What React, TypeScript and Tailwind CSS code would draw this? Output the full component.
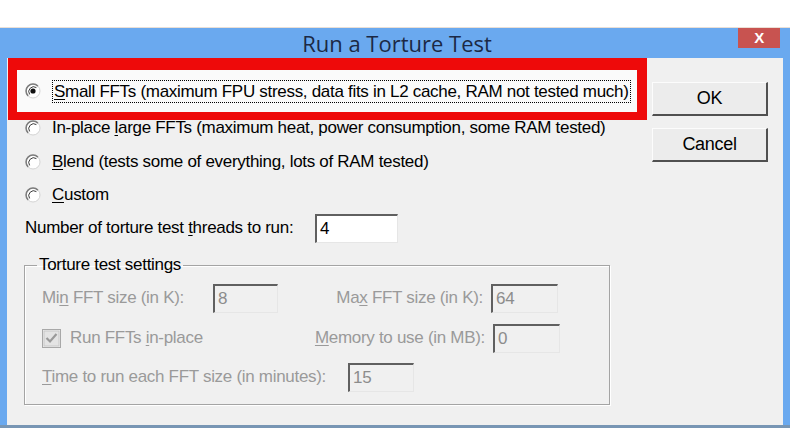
import React from "react";

const font = "font-['Liberation_Sans',Arial,sans-serif] text-[17px] tracking-[-0.3px]";

function Radio({ checked }: { checked?: boolean }) {
  return (
    <svg width="16" height="16" viewBox="0 0 16 16" className="shrink-0">
      <circle cx="8" cy="8" r="7" fill="#ffffff" stroke="#d4d4d4" strokeWidth="1" />
      <path d="M3.1 12.9 A6.9 6.9 0 0 1 12.9 3.1" fill="none" stroke="#7c7c7c" strokeWidth="1.5" />
      <path d="M4.6 11.4 A4.9 4.9 0 0 1 11.4 4.6" fill="none" stroke="#3c3c3c" strokeWidth="1" />
      {checked && <circle cx="8" cy="8" r="2.6" fill="#111111" />}
    </svg>
  );
}

function Check() {
  return (
    <svg width="19" height="19" viewBox="0 0 19 19" className="shrink-0">
      <rect x="0.5" y="0.5" width="18" height="18" fill="#f0f0f0" stroke="#a8a8a8" />
      <rect x="2" y="2" width="15" height="15" fill="#e4e4e4" stroke="#c8c8c8" />
      <path d="M4.5 9 L8 12.5 L14.5 5" fill="none" stroke="#9a9a9a" strokeWidth="2.2" />
    </svg>
  );
}

function Field({ value, w, enabled }: { value: string; w: string; enabled?: boolean }) {
  return (
    <div
      className={
        w +
        " h-[29px] flex items-center pl-[3px] border-t-2 border-l-2 border-t-[#606060] border-l-[#606060] border-b border-r border-b-[#e6e6e6] border-r-[#e6e6e6] " +
        (enabled ? "bg-white text-black" : "bg-[#f0f0f0] text-[#8c8c8c]")
      }
    >
      {value}
    </div>
  );
}

function Btn({ label }: { label: string }) {
  return (
    <button className="w-[116px] h-[34px] bg-[#ececec] border-t border-l border-t-[#fcfcfc] border-l-[#fcfcfc] border-b-2 border-r-2 border-b-[#505050] border-r-[#505050] text-black text-[18px] flex items-center justify-center">
      {label}
    </button>
  );
}

export default function App() {
  return (
    <div className={"w-[800px] h-[440px] bg-white overflow-hidden pt-[27px] " + font}>
      <div className="w-[790px] bg-[#6aa9ef] border-t border-t-[#eadfd6] px-[7px] border-b-[3px] border-b-[#7896b4]">
        <div className="relative h-[30px] flex items-center justify-center">
          <span className="font-['Open_Sans',sans-serif] text-[22px] tracking-[0px] text-[#1c2945] pl-[4px] leading-[30px]">
            Run a Torture Test
          </span>
          <div className="absolute right-[3px] top-0 w-[42px] h-[20px] bg-[#c85350] flex items-center justify-center text-white text-[15px] font-bold">
            X
          </div>
        </div>
        <div className="h-[367px] bg-[#f0f0f0] flex">
          <div className="w-[640px] flex flex-col">
            <div className="relative z-10 ml-[1px] w-[639px] h-[62px] border-l-[9px] border-t-[12px] border-r-[10px] border-b-[8px] border-[#ee0a0a]">
              <div className="h-full bg-[#fafafa] flex items-center pl-[8px] gap-[11px]">
                <Radio checked />
                <span className="border border-dotted border-black px-[1px] leading-[21px] whitespace-nowrap">
                  <u className="underline-offset-2">S</u>mall FFTs (maximum FPU stress, data fits in L2 cache, RAM not tested much)
                </span>
              </div>
            </div>
            <div className="-mt-[9px] h-[34px] flex items-center pl-[18px] gap-[11px] whitespace-nowrap">
              <Radio />
              <span>
                In-place <u className="underline-offset-2">l</u>arge FFTs (maximum heat, power consumption, some RAM tested)
              </span>
            </div>
            <div className="h-[34px] flex items-center pl-[18px] gap-[11px] whitespace-nowrap">
              <Radio />
              <span>
                <u className="underline-offset-2">B</u>lend (tests some of everything, lots of RAM tested)
              </span>
            </div>
            <div className="h-[32px] flex items-center pl-[18px] gap-[11px]">
              <Radio />
              <span>
                <u className="underline-offset-2">C</u>ustom
              </span>
            </div>
            <div className="h-[34px] flex items-center pl-[18px]">
              <span className="w-[290px]">
                Number of torture test <u className="underline-offset-2">t</u>hreads to run:
              </span>
              <Field value="4" w="w-[83px]" enabled />
            </div>
            <fieldset className="mt-[10px] ml-[17px] w-[586px] h-[150px] border border-[#a4a4a4] shadow-[inset_1px_1px_0_#ffffff,1px_1px_0_#ffffff]">
              <legend className="ml-[12px] px-[2px] text-black leading-[20px]">Torture test settings</legend>
              <div className="pt-[4px] pl-[17px] text-[#9a9a9a]">
                <div className="h-[38px] flex items-center">
                  <span className="w-[171px]">
                    Mi<u className="underline-offset-2">n</u> FFT size (in K):
                  </span>
                  <Field value="8" w="w-[65px]" />
                  <span className="w-[213px] text-right pr-[8px]">
                    Ma<u className="underline-offset-2">x</u> FFT size (in K):
                  </span>
                  <Field value="64" w="w-[67px]" />
                </div>
                <div className="h-[42px] flex items-center">
                  <div className="w-[236px] flex items-center gap-[9px]">
                    <Check />
                    <span>
                      Run FFTs <u className="underline-offset-2">i</u>n-place
                    </span>
                  </div>
                  <span className="w-[215px] text-right pr-[8px]">
                    <u className="underline-offset-2">M</u>emory to use (in MB):
                  </span>
                  <Field value="0" w="w-[67px]" />
                </div>
                <div className="h-[36px] flex items-center">
                  <span className="w-[306px]">
                    <u className="underline-offset-2">T</u>ime to run each FFT size (in minutes):
                  </span>
                  <Field value="15" w="w-[66px]" />
                </div>
              </div>
            </fieldset>
          </div>
          <div className="ml-[5px] pt-[24px] flex flex-col gap-[12px]">
            <Btn label="OK" />
            <Btn label="Cancel" />
          </div>
        </div>
      </div>
    </div>
  );
}
